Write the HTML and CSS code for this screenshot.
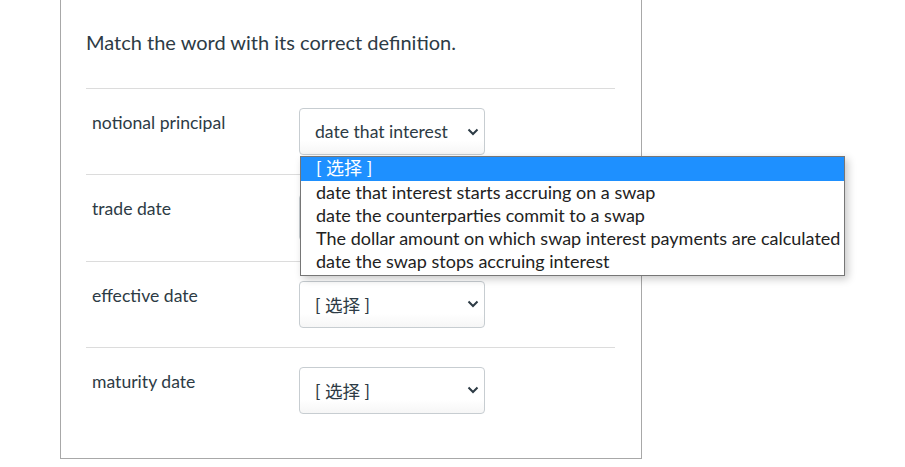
FILE: index.html
```html
<!DOCTYPE html>
<html lang="en">
<head>
<meta charset="utf-8">
<title>Matching question</title>
<link rel="stylesheet" href="styles.css">
</head>
<body>
<div class="card">
  <div class="title">Match the word with its correct definition.</div>
  <div class="row">
    <div class="label">notional principal</div>
    <div class="select"><span class="select-text">date that interest</span><svg class="chev" width="12" height="8" viewBox="0 0 12 8"><path d="M1.5 1.5 L6 6 L10.5 1.5" fill="none" stroke="#2d3b45" stroke-width="2"/></svg></div>
  </div>
  <div class="row">
    <div class="label">trade date</div>
    <div class="select"><span class="select-text cjk">[ 选择 ]</span><svg class="chev" width="12" height="8" viewBox="0 0 12 8"><path d="M1.5 1.5 L6 6 L10.5 1.5" fill="none" stroke="#2d3b45" stroke-width="2"/></svg></div>
  </div>
  <div class="row">
    <div class="label">effective date</div>
    <div class="select"><span class="select-text cjk">[ 选择 ]</span><svg class="chev" width="12" height="8" viewBox="0 0 12 8"><path d="M1.5 1.5 L6 6 L10.5 1.5" fill="none" stroke="#2d3b45" stroke-width="2"/></svg></div>
  </div>
  <div class="row">
    <div class="label">maturity date</div>
    <div class="select"><span class="select-text cjk">[ 选择 ]</span><svg class="chev" width="12" height="8" viewBox="0 0 12 8"><path d="M1.5 1.5 L6 6 L10.5 1.5" fill="none" stroke="#2d3b45" stroke-width="2"/></svg></div>
  </div>
</div>
<div class="dropdown">
  <div class="option selected cjk">[ 选择 ]</div>
  <div class="option">date that interest starts accruing on a swap</div>
  <div class="option">date the counterparties commit to a swap</div>
  <div class="option">The dollar amount on which swap interest payments are calculated</div>
  <div class="option">date the swap stops accruing interest</div>
</div>
</body>
</html>
```
FILE: styles.css
```css
html, body {
  margin: 0;
  padding: 0;
  background: #fff;
}
body {
  font-family: Lato, "Noto Sans CJK SC", sans-serif;
  color: #2d3b45;
  position: relative;
  width: 905px;
  height: 467px;
  overflow: hidden;
}
.card {
  box-sizing: border-box;
  margin-left: 60px;
  width: 582px;
  height: 459px;
  border: 1px solid #a8a8a8;
  border-top: none;
  padding: 0 26px 0 25px;
}
.title {
  font-size: 20px;
  line-height: 27px;
  padding-top: 29px;
  height: 88px;
  box-sizing: border-box;
}
.row {
  display: flex;
  align-items: flex-start;
  border-top: 1px solid #dcdcdc;
  padding: 19px 0 19.3px;
}
.label {
  width: 207px;
  padding-left: 6px;
  font-size: 17.6px;
  line-height: 24px;
  margin-top: 3px;
}
.select {
  box-sizing: border-box;
  width: 186px;
  height: 47px;
  border: 1px solid #c7cdd1;
  border-radius: 4px;
  background: linear-gradient(#fff 70%, #f6f6f6);
  display: flex;
  align-items: center;
  justify-content: space-between;
  padding: 0 5px 0 15px;
  font-size: 17.6px;
}
.cjk {
  font-family: Lato, "Noto Sans CJK SC", sans-serif;
}
.chev {
  display: block;
}
.dropdown {
  position: absolute;
  left: 300px;
  top: 156px;
  width: 545px;
  height: 120px;
  box-sizing: border-box;
  border: 1px solid #767676;
  background: #fff;
  box-shadow: 3px 3px 8px rgba(0, 0, 0, 0.22);
  font-size: 18px;
  color: #222;
}
.option {
  height: 23px;
  line-height: 23px;
  padding-left: 15px;
  white-space: nowrap;
}
.option.selected {
  background: #1e90ff;
  color: #fff;
  height: 24px;
}
```
